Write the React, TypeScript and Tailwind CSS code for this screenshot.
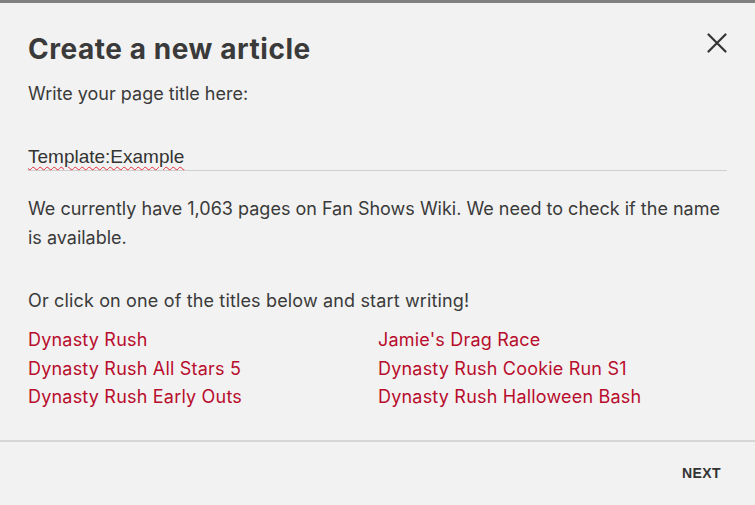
const links = [
  'Dynasty Rush',
  "Jamie's Drag Race",
  'Dynasty Rush All Stars 5',
  'Dynasty Rush Cookie Run S1',
  'Dynasty Rush Early Outs',
  'Dynasty Rush Halloween Bash',
];

export default function App() {
  return (
    <div className="w-[755px] h-[505px] bg-[#808080] pt-[3px] overflow-hidden">
      <div className="h-full bg-[#f2f2f2] flex flex-col text-[#3a3a3a] font-['Inter',sans-serif]">
        <div className="px-[28px] pt-[28px] flex-1">
          <div className="flex justify-between items-start">
            <h1 className="text-[28px] leading-[36px] font-bold tracking-[0.55px]">Create a new article</h1>
            <button className="mt-[2px] text-[#333]">
              <svg width="20" height="20" viewBox="0 0 20 20" fill="none" stroke="currentColor" strokeWidth="2.2" strokeLinecap="round">
                <path d="M1.5 1.5 18.5 18.5M18.5 1.5 1.5 18.5" />
              </svg>
            </button>
          </div>
          <p className="mt-[14px] text-[18px] leading-[26px]">Write your page title here:</p>
          <div className="mt-[38px] border-b border-[#cfcfcf] pb-[1px]">
            <span className="font-['Liberation_Sans',sans-serif] text-[19px] leading-[24px] text-[#333] underline decoration-wavy decoration-[#e0303a] decoration-1 underline-offset-[3px]">
              Template:Example
            </span>
          </div>
          <p className="mt-[23px] text-[18px] leading-[29px]">
            We currently have 1,063 pages on Fan Shows Wiki. We need to check if the name is available.
          </p>
          <p className="mt-[34px] text-[18px] leading-[29px] tracking-[0.15px]">Or click on one of the titles below and start writing!</p>
          <div className="mt-[11px] grid grid-cols-[350px_1fr] text-[18px] leading-[28.5px] tracking-[0.2px] text-[#b80d2c]">
            {links.map((l) => (
              <a key={l} className="cursor-pointer">{l}</a>
            ))}
          </div>
        </div>
        <div className="h-[2px] bg-[#d6d6d6]" />
        <div className="h-[63px] flex items-center justify-end px-[34px]">
          <button className="font-['Liberation_Sans',sans-serif] font-bold text-[14px] tracking-[0.4px] text-[#333]">NEXT</button>
        </div>
      </div>
    </div>
  );
}
